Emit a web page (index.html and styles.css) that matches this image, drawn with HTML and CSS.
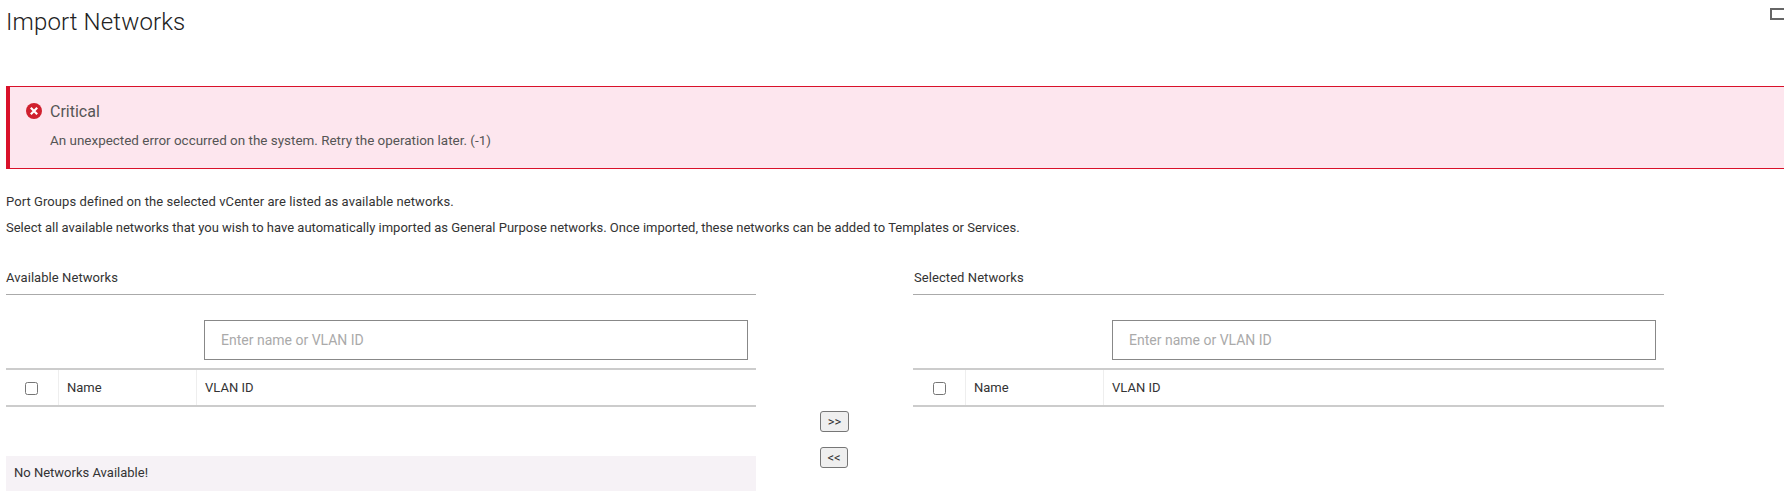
FILE: index.html
```html
<!DOCTYPE html>
<html lang="en">
<head>
<meta charset="utf-8">
<title>Import Networks</title>
<link rel="stylesheet" href="styles.css">
</head>
<body>
<header class="title-row">
  <h1 class="title">Import Networks</h1>
  <span class="corner-box"></span>
</header>
<section class="alert">
  <div class="alert-head">
    <svg class="alert-icon" viewBox="0 0 16 16" aria-hidden="true">
      <circle cx="8" cy="8" r="8" fill="#d0202e"/>
      <path d="M4.8 4.8l6.4 6.4M11.2 4.8l-6.4 6.4" stroke="#fff" stroke-width="2.2" fill="none"/>
    </svg>
    <span class="alert-title">Critical</span>
  </div>
  <p class="alert-text">An unexpected error occurred on the system. Retry the operation later. (-1)</p>
</section>
<p class="intro first">Port Groups defined on the selected vCenter are listed as available networks.</p>
<p class="intro">Select all available networks that you wish to have automatically imported as General Purpose networks. Once imported, these networks can be added to Templates or Services.</p>
<main class="picker">
  <section class="panel">
    <h2 class="panel-title">Available Networks</h2>
    <div class="filter"><input class="filter-input" type="text" placeholder="Enter name or VLAN ID"></div>
    <div class="table-head">
      <div class="cell cell-check"><span class="check"></span></div>
      <div class="cell cell-name">Name</div>
      <div class="cell">VLAN ID</div>
    </div>
    <div class="empty">No Networks Available!</div>
  </section>
  <div class="moves">
    <button class="move move-add" type="button">&gt;&gt;</button>
    <button class="move move-remove" type="button">&lt;&lt;</button>
  </div>
  <section class="panel panel-selected">
    <h2 class="panel-title">Selected Networks</h2>
    <div class="filter"><input class="filter-input" type="text" placeholder="Enter name or VLAN ID"></div>
    <div class="table-head">
      <div class="cell cell-check"><span class="check"></span></div>
      <div class="cell cell-name">Name</div>
      <div class="cell">VLAN ID</div>
    </div>
  </section>
</main>
</body>
</html>
```
FILE: styles.css
```css
* { box-sizing: border-box; }
html, body { margin: 0; height: 497px; overflow: hidden; background: #fff; }
body { font-family: Roboto, "Liberation Sans", sans-serif; color: #333; font-size: 13px; }
.title-row { display: flex; justify-content: space-between; height: 86px; padding: 8px 0 0 6px; }
.title { margin: 0; font-size: 24px; font-weight: 300; line-height: 28px; color: #222; letter-spacing: .13px; }
.corner-box { width: 14px; height: 12px; border: 2px solid #666; border-right: 0; background: #fff; }
.alert { margin-left: 6px; height: 83px; background: #fde6ee; border-top: 1px solid #d9112a; border-bottom: 1px solid #d9112a; border-left: 4px solid #d9112a; padding: 14px 0 0 16px; }
.alert-head { display: flex; align-items: center; gap: 8px; height: 20px; }
.alert-icon { width: 16px; height: 16px; }
.alert-title { font-size: 16px; color: #555; }
.alert-text { margin: 11px 0 0 24px; font-size: 13.45px; line-height: 18px; color: #555; }
.intro { margin: 8px 0 0 6px; font-size: 13px; line-height: 18px; color: #333; }
.intro.first { margin-top: 24px; letter-spacing: .07px; }
.picker { display: flex; padding: 32px 0 0 6px; }
.panel { width: 750px; flex: none; }
.panel-selected { width: 751px; }
.panel-title { margin: 0; font-size: 13px; font-weight: 400; line-height: 18px; color: #333; border-bottom: 1px solid #aaa; height: 26px; letter-spacing: .07px; }
.panel-selected .panel-title { text-indent: 1px; }
.filter { display: flex; justify-content: flex-end; padding: 25px 8px 8px 0; }
.filter-input { width: 544px; height: 40px; padding: 0 16px; border: 1px solid #888; border-radius: 0; font: 14px Roboto, sans-serif; outline: 0; }
.filter-input::placeholder { color: #aaa; opacity: 1; }
.table-head { display: flex; height: 39px; border-top: 2px solid #ccc; border-bottom: 2px solid #ccc; }
.cell { display: flex; align-items: center; padding-left: 8px; font-size: 13px; color: #333; }
.cell-check { width: 53px; padding-left: 19px; border-right: 1px solid #eee; }
.panel-selected .cell-check { padding-left: 20px; }
.cell-name { width: 138px; border-right: 1px solid #eee; padding-left: 8px; }
.check { width: 13px; height: 13px; margin-top: 2px; border: 1px solid #767676; border-radius: 2.5px; background: #fff; }
.empty { margin-top: 49px; height: 35px; padding: 0 0 3px 8px; display: flex; align-items: center; background: #f6f2f6; font-size: 13px; color: #333; }
.moves { width: 157px; flex: none; display: flex; flex-direction: column; align-items: flex-start; gap: 15px; padding: 142px 0 0 64px; }
.move { width: 29px; height: 21px; padding: 0; background: #efefef; border: 1px solid #767676; border-radius: 3px; font: 13px Roboto, sans-serif; color: #333; }
.move-remove { width: 28px; }
```
